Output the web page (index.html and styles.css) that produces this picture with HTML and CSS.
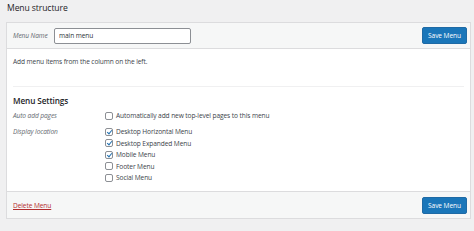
FILE: index.html
```
<!DOCTYPE html>
<html lang="en-US">
<head>
<meta charset="UTF-8">
<title>Menus</title>
<link rel="stylesheet" href="styles.css">
</head>
<body>
  <div class="wrap">
    <h2 class="page-title">Menu structure</h2>
    <div class="menu-box">
      <div class="box-header">
        <label class="name-field">
          <span class="field-label name-label">Menu Name</span>
          <input class="name-input" type="text" value="main menu">
        </label>
        <button class="btn-primary">Save Menu</button>
      </div>
      <div class="box-body">
        <p class="hint">Add menu items from the column on the left.</p>
        <div class="menu-settings">
          <h3 class="settings-title">Menu Settings</h3>
          <div class="setting-row">
            <span class="field-label setting-label">Auto add pages</span>
            <div class="options">
              <label class="option"><span class="check"></span>Automatically add new top-level pages to this menu</label>
            </div>
          </div>
          <div class="setting-row">
            <span class="field-label setting-label">Display location</span>
            <div class="options">
              <label class="option"><span class="check checked"></span>Desktop Horizontal Menu</label>
              <label class="option"><span class="check checked"></span>Desktop Expanded Menu</label>
              <label class="option"><span class="check checked"></span>Mobile Menu</label>
              <label class="option"><span class="check"></span>Footer Menu</label>
              <label class="option"><span class="check"></span>Social Menu</label>
            </div>
          </div>
        </div>
      </div>
      <div class="box-footer">
        <a class="delete-link" href="#">Delete Menu</a>
        <button class="btn-primary">Save Menu</button>
      </div>
    </div>
  </div>
</body>
</html>
```
FILE: styles.css
```
body {
  margin: 0;
  padding: 0;
  background: #f0f0f1;
  font-family: "Open Sans", sans-serif;
  color: #3c434a;
  font-size: 6.6px;
  letter-spacing: -0.1px;
  height: 231px;
  overflow: hidden;
}

.wrap {
  padding: 2px 3px 0 6px;
}

.page-title {
  margin: 0 0 0 1px;
  font-size: 8.6px;
  line-height: 13px;
  font-weight: 400;
  color: #1d2327;
}

/* box */

.menu-box {
  margin-top: 7px;
  background: #fff;
  border: 1px solid #dcdcde;
}

.box-header, .box-footer {
  display: flex;
  align-items: center;
  justify-content: space-between;
  padding: 0 3px 0 6px;
  background: #f6f7f7;
}
.box-header {
  height: 25px;
  border-bottom: 1px solid #dcdcde;
}
.box-footer {
  height: 26px;
  border-top: 1px solid #dcdcde;
}

.name-field {
  display: flex;
  align-items: center;
}
.field-label {
  font-style: italic;
  color: #646970;
}
.name-label {
  width: 41px;
}
.name-input {
  width: 137px;
  height: 16px;
  box-sizing: border-box;
  border: 1px solid #8c8f94;
  border-radius: 2px;
  padding: 0 4px;
  font-family: inherit;
  font-size: 6.6px;
  letter-spacing: -0.1px;
  color: #2c3338;
  background: #fff;
}

.btn-primary {
  width: 45px;
  height: 17px;
  padding: 0;
  border: 1px solid #1f6aa5;
  border-radius: 2px;
  background: #1a76b9;
  color: #fff;
  font-family: inherit;
  font-size: 6.6px;
  letter-spacing: -0.1px;
}

/* body */

.box-body {
  padding: 0 6px;
  height: 142px;
}
.hint {
  margin: 0;
  padding-top: 7px;
  line-height: 12px;
}

.menu-settings {
  margin-top: 18px;
  border-top: 1px solid #f0f0f1;
}
.settings-title {
  margin: 0;
  padding-top: 7px;
  font-size: 8.2px;
  line-height: 13px;
  font-weight: 600;
  color: #1d2327;
}

.setting-row {
  display: flex;
  margin-top: 3px;
}
.setting-row + .setting-row {
  margin-top: 4px;
}
.setting-label {
  width: 92px;
  line-height: 12px;
}
.options {
  display: flex;
  flex-direction: column;
}
.option {
  display: flex;
  align-items: center;
  height: 11.5px;
}
.check {
  width: 8px;
  height: 8px;
  margin-right: 3px;
  border: 1px solid #8c8f94;
  border-radius: 2px;
  box-sizing: border-box;
  position: relative;
}
.check.checked::after {
  content: "";
  position: absolute;
  left: 2px;
  top: 0px;
  width: 2px;
  height: 4px;
  border: solid #2271b1;
  border-width: 0 1.2px 1.2px 0;
  transform: rotate(40deg);
}

/* footer */

.delete-link {
  color: #b32d2e;
  text-decoration: underline;
}
```
